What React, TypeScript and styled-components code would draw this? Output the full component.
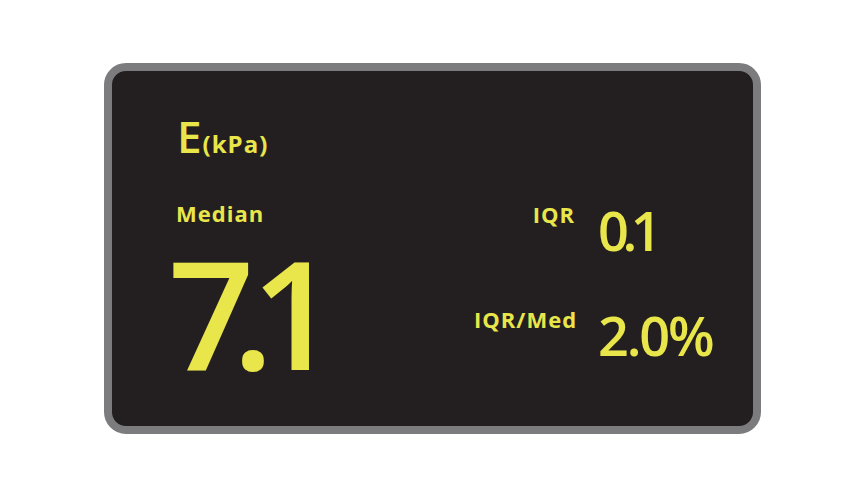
import React from "react";
import styled, { createGlobalStyle } from "styled-components";

const Global = createGlobalStyle`
  html, body { margin: 0; padding: 0; background: #ffffff; }
  body { font-family: "Open Sans", "Noto Sans", sans-serif; }
`;

const Page = styled.div`
  width: 864px;
  height: 496px;
  display: flex;
  align-items: center;
  justify-content: center;
`;

const Card = styled.div`
  box-sizing: border-box;
  width: 657px;
  height: 371px;
  margin-left: 1px;
  background: #231f20;
  border: 8px solid #7c7c7f;
  border-radius: 22px;
  padding: 43px 0 0 64px;
  color: #e9e64b;
  font-family: "Open Sans", "Noto Sans", sans-serif;
  font-weight: 700;
  display: flex;
  flex-direction: column;
`;

const Title = styled.div`
  display: flex;
  align-items: baseline;
  line-height: 1;
  margin-bottom: 44px;
`;

const TitleMain = styled.span`
  font-size: 44px;
  font-weight: 600;
  margin-left: 1px;
`;

const TitleUnit = styled.span`
  font-size: 24px;
  letter-spacing: 1px;
  margin-left: 1px;
`;

const Body = styled.div`
  display: flex;
  align-items: flex-start;
`;

const LeftCol = styled.div`
  width: 298px;
  display: flex;
  flex-direction: column;
`;

const Label = styled.div`
  font-size: 22px;
  line-height: 1;
  letter-spacing: 1px;
`;

const BigValue = styled.div`
  font-size: 151px;
  font-weight: 600;
  line-height: 0.72;
  letter-spacing: -0.147em;
  margin-top: 34px;
  margin-left: -8px;
`;

const Stats = styled.div`
  display: grid;
  grid-template-columns: 101px auto;
  column-gap: 23px;
  row-gap: 51px;
  margin-top: 1px;
  align-items: start;
`;

const StatLabel = styled(Label)`
  text-align: right;
  white-space: nowrap;
`;

const StatValue = styled.div<{ $tight?: boolean }>`
  font-size: 54px;
  font-weight: 600;
  line-height: 1;
  letter-spacing: ${(p) => (p.$tight ? "-0.12em" : "-0.04em")};
`;

export default function App() {
  return (
    <>
      <Global />
      <Page>
        <Card>
          <Title>
            <TitleMain>E</TitleMain>
            <TitleUnit>(kPa)</TitleUnit>
          </Title>
          <Body>
            <LeftCol>
              <Label>Median</Label>
              <BigValue>7.1</BigValue>
            </LeftCol>
            <Stats>
              <StatLabel>IQR</StatLabel>
              <StatValue $tight>0.1</StatValue>
              <StatLabel>IQR/Med</StatLabel>
              <StatValue>2.0%</StatValue>
            </Stats>
          </Body>
        </Card>
      </Page>
    </>
  );
}
